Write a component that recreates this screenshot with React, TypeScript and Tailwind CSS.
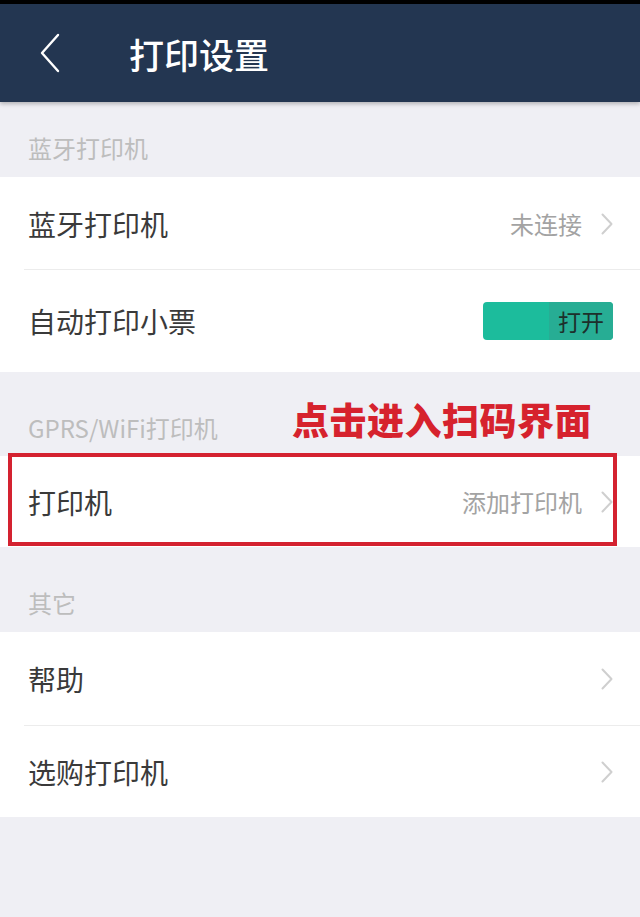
import React from 'react'

const font = { fontFamily: '"Noto Sans CJK SC", "Noto Sans", sans-serif' }

function Chevron() {
  return (
    <svg width="12" height="22" viewBox="0 0 12 22" fill="none" className="shrink-0">
      <path d="M1.5 1.5 L10.5 11 L1.5 20.5" stroke="#cfcfcf" strokeWidth="2" strokeLinecap="round" strokeLinejoin="round" />
    </svg>
  )
}

function SectionHeader({ title, children, h }: { title: string; children?: React.ReactNode; h: string }) {
  return (
    <div className={`flex items-end justify-between pl-[28px] pr-[48px] pb-[17px] ${h}`}>
      <span className="text-[24px] leading-none text-[#bdbdbd]">{title}</span>
      {children}
    </div>
  )
}

function Row({
  label,
  value,
  chevron = true,
  divider = false,
  right,
  h = 'h-[93px]',
}: {
  label: string
  value?: string
  chevron?: boolean
  divider?: boolean
  right?: React.ReactNode
  h?: string
}) {
  return (
    <div className={`relative flex items-center bg-white pl-[28px] pr-[27px] ${h}`}>
      <span className="flex-1 text-[28px] text-[#3a3a3a]">{label}</span>
      {value && <span className="mr-[19px] text-[24px] text-[#a3a3a3]">{value}</span>}
      {right}
      {chevron && <Chevron />}
      {divider && <div className="absolute bottom-0 left-[24px] right-0 h-px bg-[#ececec]" />}
    </div>
  )
}

export default function App() {
  return (
    <div className="min-h-[917px] w-[640px] bg-[#efeff4]" style={font}>
      <header className="border-t-[4px] border-black">
        <div className="flex h-[98px] items-center bg-[#233651] shadow-[0_2px_4px_rgba(0,0,0,0.25)]">
          <svg width="22" height="40" viewBox="0 0 22 40" fill="none" className="ml-[39px]">
            <path d="M19 2 L3 20 L19 38" stroke="#ffffff" strokeWidth="2.4" strokeLinecap="round" strokeLinejoin="round" />
          </svg>
          <h1 className="ml-[68px] text-[35px] font-medium leading-none text-white">打印设置</h1>
        </div>
      </header>

      <SectionHeader title="蓝牙打印机" h="h-[75px]" />
      <Row label="蓝牙打印机" value="未连接" divider />
      <Row
        label="自动打印小票"
        chevron={false}
        h="h-[102px]"
        right={
          <div className="flex h-[38px] w-[130px] overflow-hidden rounded-[4px] bg-[#1cbc9c]">
            <div className="flex-1" />
            <div className="flex w-[64px] items-center justify-center bg-[#27ad94] text-[23px] leading-none text-[#1d2f2b]">
              打开
            </div>
          </div>
        }
      />

      <div className="flex h-[84px] items-end justify-between pl-[28px] pr-[48px] pb-[16px]">
        <span className="text-[24px] leading-none text-[#bdbdbd]">GPRS/WiFi打印机</span>
        <span className="mb-[2px] text-[37px] font-black leading-none tracking-[0.5px] text-[#d6222d]">点击进入扫码界面</span>
      </div>
      <div className="relative">
        <Row label="打印机" value="添加打印机" h="h-[91px]" />
        <div className="pointer-events-none absolute -top-[3px] bottom-[1px] left-[8px] right-[23px] border-[4px] border-[#d42230]" />
      </div>

      <SectionHeader title="其它" h="h-[85px]" />
      <Row label="帮助" divider h="h-[94px]" />
      <Row label="选购打印机" h="h-[91px]" />
    </div>
  )
}
